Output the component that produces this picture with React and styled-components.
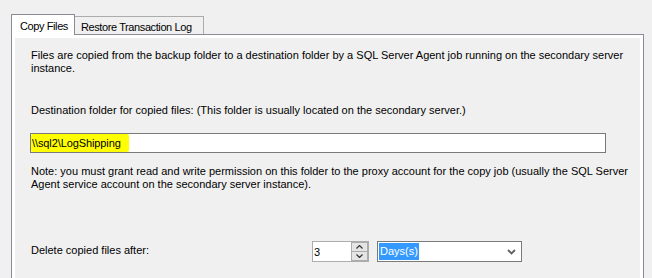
import React from "react";
import styled, { createGlobalStyle } from "styled-components";

const GlobalStyle = createGlobalStyle`
  html, body {
    margin: 0;
    padding: 0;
    background: #f0f0f0;
  }
  body {
    font-family: "Liberation Sans", Arial, sans-serif;
    font-size: 11px;
    color: #000;
  }
`;

const Screen = styled.div`
  height: 278px;
  overflow: hidden;
  padding: 14px 0 0 11px;
  box-sizing: border-box;
`;

const TabStrip = styled.div`
  display: flex;
  align-items: flex-end;
  height: 20px;
`;

const Tab = styled.div`
  box-sizing: border-box;
  width: ${(p) => p.$width}px;
  height: ${(p) => (p.$active ? "21px" : "18px")};
  padding: ${(p) => (p.$active ? "1px 0 0 8px" : "2px 0 0 6px")};
  display: flex;
  align-items: center;
  background: ${(p) => (p.$active ? "#fff" : "#f0f0f0")};
  border: 1px solid ${(p) => (p.$active ? "#898c95" : "#acacac")};
  border-bottom: none;
  margin-bottom: ${(p) => (p.$active ? "-1px" : "0")};
  margin-left: ${(p) => (p.$active ? "0" : "-1px")};
  position: relative;
  z-index: ${(p) => (p.$active ? 2 : 1)};
  white-space: nowrap;
  letter-spacing: -0.4px;
`;

const Panel = styled.div`
  width: 633px;
  box-sizing: border-box;
  border: 1px solid #898c95;
  background: #fff;
  padding: 3px;
  position: relative;
  z-index: 1;
`;

const Page = styled.div`
  background: #f0f0f0;
  height: 300px;
  padding: 11px 16px 0 16px;
  display: flex;
  flex-direction: column;
`;

const Text = styled.p`
  margin: ${(p) => p.$mt || 0}px 0 0 0;
  line-height: 13px;
  width: 602px;
`;

const TextBox = styled.div`
  margin-top: 16px;
  width: 576px;
  height: 20px;
  box-sizing: border-box;
  border: 1px solid #7a7a7a;
  background: #fff;
  margin-left: -1px;
  display: flex;
  align-items: center;
`;

const Highlight = styled.span`
  background: #ffff00;
  padding: 3px 8px 3px 1px;
  border-radius: 2px;
  line-height: 12px;
  letter-spacing: -0.1px;
`;

const Row = styled.div`
  margin-top: 50px;
  display: flex;
  align-items: center;
  height: 21px;
`;

const RowLabel = styled.span`
  width: 281px;
  margin-top: -3px;
`;

const Spinner = styled.div`
  width: 57px;
  height: 21px;
  box-sizing: border-box;
  border: 1px solid #acacac;
  background: #fff;
  display: flex;
  align-items: stretch;
`;

const SpinValue = styled.span`
  flex: 1;
  display: flex;
  align-items: center;
  padding-left: 1px;
`;

const SpinButtons = styled.div`
  width: 15px;
  display: flex;
  flex-direction: column;
  gap: 1px;
  background: #acacac;
  border-left: 1px solid #acacac;
  padding: 1px 1px 1px 0;
`;

const SpinButton = styled.div`
  flex: 1;
  background: #e5e5e5;
  display: flex;
  align-items: center;
  justify-content: center;
`;

const Combo = styled.div`
  margin-left: 8px;
  width: 145px;
  height: 21px;
  box-sizing: border-box;
  border: 1px solid #7a7a7a;
  background: #fff;
  display: flex;
  align-items: center;
  justify-content: space-between;
  padding: 0 5px 0 1px;
`;

const Selected = styled.span`
  background: #3399ff;
  color: #fff;
  padding: 2px 1px;
  line-height: 13px;
`;

const Chevron = ({ up }) => (
  <svg width="7" height="4" viewBox="0 0 7 4">
    <path
      d={up ? "M0.5 3.5 L3.5 0.5 L6.5 3.5" : "M0.5 0.5 L3.5 3.5 L6.5 0.5"}
      fill="none"
      stroke="#333"
      strokeWidth="1.2"
    />
  </svg>
);

export default function App() {
  return (
    <>
      <GlobalStyle />
      <Screen>
        <TabStrip>
          <Tab $active $width={64}>Copy Files</Tab>
          <Tab $width={130}>Restore Transaction Log</Tab>
        </TabStrip>
        <Panel>
          <Page>
            <Text>
              Files are copied from the backup folder to a destination folder by a SQL Server Agent job running on the secondary server instance.
            </Text>
            <Text $mt={29}>
              Destination folder for copied files: (This folder is usually located on the secondary server.)
            </Text>
            <TextBox>
              <Highlight>\\sql2\LogShipping</Highlight>
            </TextBox>
            <Text $mt={12}>
              Note: you must grant read and write permission on this folder to the proxy account for the copy job (usually the SQL Server Agent service account on the secondary server instance).
            </Text>
            <Row>
              <RowLabel>Delete copied files after:</RowLabel>
              <Spinner>
                <SpinValue>3</SpinValue>
                <SpinButtons>
                  <SpinButton><Chevron up /></SpinButton>
                  <SpinButton><Chevron /></SpinButton>
                </SpinButtons>
              </Spinner>
              <Combo>
                <Selected>Days(s)</Selected>
                <svg width="9" height="6" viewBox="0 0 9 6">
                  <path d="M1 1 L4.5 4.5 L8 1" fill="none" stroke="#606060" strokeWidth="1.8" />
                </svg>
              </Combo>
            </Row>
          </Page>
        </Panel>
      </Screen>
    </>
  );
}
